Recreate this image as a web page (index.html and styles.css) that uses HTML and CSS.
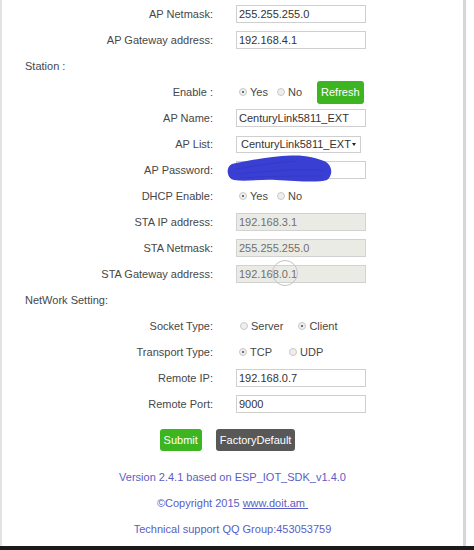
FILE: index.html
```html
<!DOCTYPE html>
<html>
<head>
<meta charset="utf-8">
<link rel="stylesheet" href="styles.css">
</head>
<body>
<div class="frame">
  <div class="row"><span class="lbl">AP Netmask:</span><div class="field"><input class="txt" value="255.255.255.0"></div></div>
  <div class="row"><span class="lbl">AP Gateway address:</span><div class="field"><input class="txt" value="192.168.4.1"></div></div>
  <div class="row section">Station :</div>
  <div class="row"><span class="lbl">Enable :</span>
    <div class="field radios r-enable">
      <span class="opt"><span class="radio on"></span>Yes</span>
      <span class="opt"><span class="radio"></span>No</span>
      <button class="btn green refresh">Refresh</button>
    </div>
  </div>
  <div class="row"><span class="lbl">AP Name:</span><div class="field"><input class="txt" value="CenturyLink5811_EXT"></div></div>
  <div class="row"><span class="lbl">AP List:</span><div class="field"><div class="select"><span>CenturyLink5811_EXT</span><span class="arrow"></span></div></div></div>
  <div class="row"><span class="lbl">AP Password:</span>
    <div class="field pw"><input class="txt" value="">
      <svg class="scribble" width="108" height="28" viewBox="0 0 108 28"><path d="M6 9 C20 6 45 1 65 0.5 C80 0 90 3 98 6 C106 9 108 20 101 25 C92 28 70 26 50 25 C35 24 20 27 8 25 C1 24 -1 12 6 9 Z" fill="#3a3fd4"/><path d="M10 14 C30 11 50 7 70 6 M12 19 C40 16 70 14 98 15 M14 23 C40 21 70 21 96 21" stroke="#2f33b8" stroke-width="0.8" fill="none" opacity="0.6"/></svg>
    </div>
  </div>
  <div class="row"><span class="lbl">DHCP Enable:</span>
    <div class="field radios r-enable">
      <span class="opt"><span class="radio on"></span>Yes</span>
      <span class="opt"><span class="radio"></span>No</span>
    </div>
  </div>
  <div class="row"><span class="lbl">STA IP address:</span><div class="field"><input class="txt off" value="192.168.3.1" disabled></div></div>
  <div class="row"><span class="lbl">STA Netmask:</span><div class="field"><input class="txt off" value="255.255.255.0" disabled></div></div>
  <div class="row"><span class="lbl">STA Gateway address:</span><div class="field gw"><input class="txt off" value="192.168.0.1" disabled><span class="touch"></span></div></div>
  <div class="row section">NetWork Setting:</div>
  <div class="row"><span class="lbl">Socket Type:</span>
    <div class="field radios r-socket">
      <span class="opt"><span class="radio"></span>Server</span>
      <span class="opt"><span class="radio on"></span>Client</span>
    </div>
  </div>
  <div class="row"><span class="lbl">Transport Type:</span>
    <div class="field radios r-trans">
      <span class="opt"><span class="radio on"></span>TCP</span>
      <span class="opt"><span class="radio"></span>UDP</span>
    </div>
  </div>
  <div class="row"><span class="lbl">Remote IP:</span><div class="field"><input class="txt" value="192.168.0.7"></div></div>
  <div class="row"><span class="lbl">Remote Port:</span><div class="field"><input class="txt" value="9000"></div></div>
  <div class="actions">
    <button class="btn green">Submit</button>
    <button class="btn dark">FactoryDefault</button>
  </div>
  <div class="footer">
    <p>Version 2.4.1 based on ESP_IOT_SDK_v1.4.0</p>
    <p>©Copyright 2015 <a href="#">www.doit.am&nbsp;</a></p>
    <p>Technical support QQ Group:453053759</p>
  </div>
</div>
<div class="bottom"></div>
</body>
</html>
```
FILE: styles.css
```css
html, body {
  margin: 0;
  padding: 0;
  background: #fff;
}
body {
  font-family: "Liberation Sans", Arial, sans-serif;
  font-size: 11px;
  color: #474747;
  width: 474px;
  height: 550px;
  overflow: hidden;
}
.frame {
  width: 461px;
  height: 545px;
  padding-top: 1px;
  border-left: 2px solid #e2e2e2;
  border-right: 3px solid #d6d6d6;
  box-sizing: content-box;
}
.row {
  display: flex;
  align-items: center;
  height: 26px;
}
.section {
  padding-left: 23px;
}
.lbl {
  width: 211px;
  text-align: right;
  flex: none;
}
.field {
  margin-left: 23px;
  display: flex;
  align-items: center;
  position: relative;
}
.txt {
  width: 130px;
  height: 18px;
  box-sizing: border-box;
  border: 1px solid #cfcfcf;
  padding: 0 2px;
  margin: 0;
  font-family: "Liberation Sans", Arial, sans-serif;
  font-size: 11px;
  color: #333;
  background: #fff;
  outline: none;
}
.txt.off {
  background: #ebebe6;
  border-color: #d2d2d2;
  color: #707070;
}
.select {
  width: 125px;
  height: 17px;
  box-sizing: border-box;
  border: 1px solid #cfcfcf;
  display: flex;
  align-items: center;
  justify-content: space-between;
  padding: 0 4px 0 4px;
  color: #333;
  background: #fff;
}
.arrow {
  width: 0;
  height: 0;
  border-left: 2px solid transparent;
  border-right: 2px solid transparent;
  border-top: 3px solid #222;
}
.radios {
  padding-left: 3px;
}
.opt {
  display: inline-flex;
  align-items: center;
  gap: 3px;
}
.radio {
  width: 8px;
  height: 8px;
  box-sizing: border-box;
  border-radius: 50%;
  border: 1px solid #c9c9c9;
  background: #eeeeee;
  position: relative;
}
.radio.on::after {
  content: "";
  position: absolute;
  left: 2px;
  top: 2px;
  width: 2px;
  height: 2px;
  border-radius: 50%;
  background: #444;
}
.r-enable .opt + .opt { margin-left: 9px; }
.r-socket { padding-left: 4px; }
.r-socket .opt + .opt { margin-left: 15px; }
.r-trans .opt + .opt { margin-left: 17px; }
.btn {
  border: none;
  border-radius: 3px;
  color: #fff;
  font-family: "Liberation Sans", Arial, sans-serif;
  font-size: 11px;
  height: 22px;
  padding: 0 4px;
  margin: 0;
}
.green { background: #3db521; }
.dark { background: #585858; }
.refresh {
  margin-left: 15px;
  height: 23px;
  padding: 0 4px;
}
.scribble {
  position: absolute;
  left: -10px;
  top: -6px;
}
.touch {
  position: absolute;
  left: 36px;
  top: -5px;
  width: 26px;
  height: 26px;
  box-sizing: border-box;
  border: 1px solid #c4c4c4;
  border-radius: 50%;
}
.actions {
  display: flex;
  justify-content: center;
  gap: 14px;
  margin-top: 12px;
  padding-right: 10px;
}
.footer {
  margin-top: 13px;
  text-align: center;
  color: #5a5ec4;
}
.footer p {
  margin: 0;
  height: 26px;
  line-height: 26px;
}
.footer a {
  color: #5a5ec4;
  text-decoration: underline;
}
.bottom {
  height: 4px;
  background: #1a1a1a;
  width: 474px;
}
```
